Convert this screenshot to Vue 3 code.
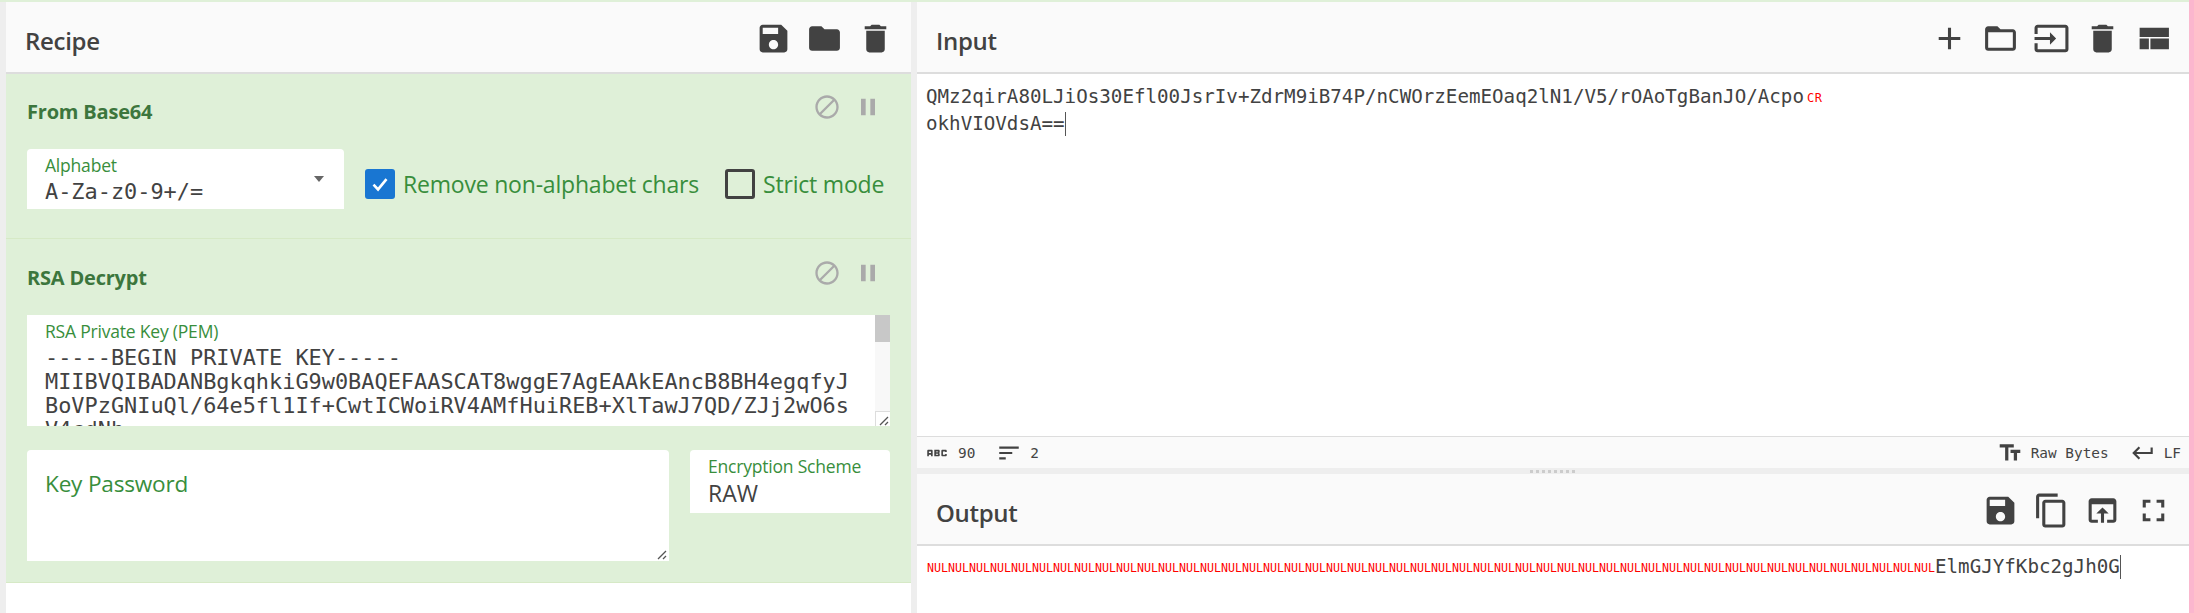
<script setup>
const icons = {
  save: 'M17 3H5c-1.11 0-2 .9-2 2v14c0 1.1.89 2 2 2h14c1.1 0 2-.9 2-2V7l-4-4zm-5 16c-1.66 0-3-1.34-3-3s1.34-3 3-3 3 1.34 3 3-1.34 3-3 3zm3-10H5V5h10v4z',
  folder: 'M10 4H4c-1.1 0-1.99.9-1.99 2L2 18c0 1.1.9 2 2 2h16c1.1 0 2-.9 2-2V8c0-1.1-.9-2-2-2h-8l-2-2z',
  del: 'M6 19c0 1.1.9 2 2 2h8c1.1 0 2-.9 2-2V7H6v12zM19 4h-3.5l-1-1h-5l-1 1H5v2h14V4z',
  add: 'M19 13h-6v6h-2v-6H5v-2h6V5h2v6h6v2z',
  open: 'M20 6h-8l-2-2H4c-1.1 0-1.99.9-1.99 2L2 18c0 1.1.9 2 2 2h16c1.1 0 2-.9 2-2V8c0-1.1-.9-2-2-2zm0 12H4V8h16v10z',
  input: 'M21 3.01H3c-1.1 0-2 .9-2 2V9h2V4.99h18v14.03H3V15H1v4.01c0 1.1.9 1.98 2 1.98h18c1.1 0 2-.88 2-1.98v-14c0-1.11-.9-2-2-2zM11 16l4-4-4-4v3H1v2h10v3z',
  layout: 'M3 19h6v-7H3v7zm7 0h12v-7H10v7zM3 5v6h19V5H3z',
  copy: 'M16 1H4c-1.1 0-2 .9-2 2v14h2V3h12V1zm3 4H8c-1.1 0-2 .9-2 2v14c0 1.1.9 2 2 2h11c1.1 0 2-.9 2-2V7c0-1.1-.9-2-2-2zm0 16H8V7h11v14z',
  browser: 'M19 4H5c-1.11 0-2 .9-2 2v12c0 1.1.89 2 2 2h4v-2H5V8h14v10h-4v2h4c1.1 0 2-.9 2-2V6c0-1.1-.89-2-2-2zm-7 6l-4 4h3v6h2v-6h3l-4-4z',
  full: 'M7 14H5v5h5v-2H7v-3zm-2-4h2V7h3V5H5v5zm12 7h-3v2h5v-5h-2v3zM14 5v2h3v3h2V5h-5z',
  block: 'M12 2C6.48 2 2 6.48 2 12s4.48 10 10 10 10-4.48 10-10S17.52 2 12 2zM4 12c0-4.42 3.58-8 8-8 1.85 0 3.55.63 4.9 1.69L5.69 16.9C4.63 15.55 4 13.85 4 12zm8 8c-1.85 0-3.55-.63-4.9-1.69L18.31 7.1C19.37 8.45 20 10.15 20 12c0 4.42-3.58 8-8 8z',
  pause: 'M6 19h4V5H6v14zm8-14v14h4V5h-4z',
  sort: 'M3 18h6v-2H3v2zM3 6v2h18V6H3zm0 7h12v-2H3v2z',
  abc: 'M21 11h-1.5v-.5h-2v3h2V13H21v1c0 .55-.45 1-1 1h-3c-.55 0-1-.45-1-1v-4c0-.55.45-1 1-1h3c.55 0 1 .45 1 1v1zM8 10v5H6.5v-1.5h-2V15H3v-5c0-.55.45-1 1-1h3c.55 0 1 .45 1 1zm-1.5.5h-2V12h2v-1.5zm7 1.5c.55 0 1 .45 1 1v1c0 .55-.45 1-1 1h-4V9h4c.55 0 1 .45 1 1v1c0 .55-.45 1-1 1zM11 10.5v.75h2v-.75h-2zm2 2.25h-2v.75h2v-.75z',
  text: 'M2.5 4v3h5v12h3V7h5V4h-13zm19 5h-9v3h3v7h3v-7h3V9z',
  ret: 'M19 7v4H5.83l3.58-3.59L8 6l-6 6 6 6 1.41-1.41L5.83 13H21V7h-2z'
}
const recipeBtns = ['save', 'folder', 'del']
const inputBtns = ['add', 'open', 'input', 'del', 'layout']
const outputBtns = ['save', 'copy', 'browser', 'full']
const opBtns = ['block', 'pause']
const pem = `-----BEGIN PRIVATE KEY-----
MIIBVQIBADANBgkqhkiG9w0BAQEFAASCAT8wggE7AgEAAkEAncB8BH4egqfyJ
BoVPzGNIuQl/64e5fl1If+CwtICWoiRV4AMfHuiREB+XlTawJ7QD/ZJj2wO6s
V4cdNh`
const nulCount = 48
</script>

<template>
  <div class="page">
    <div class="main">
      <div class="strip"></div>
      <div class="cols">
        <section class="recipe">
          <header class="head">
            <h2 class="title">Recipe</h2>
            <div class="btns">
              <span v-for="b in recipeBtns" :key="b" class="btn">
                <svg viewBox="0 0 24 24"><path :d="icons[b]" /></svg>
              </span>
            </div>
          </header>

          <div class="op op-b64">
            <div class="op-head">
              <h3 class="op-title">From Base64</h3>
              <div class="op-btns">
                <svg v-for="b in opBtns" :key="b" viewBox="0 0 24 24"><path :d="icons[b]" /></svg>
              </div>
            </div>
            <div class="op-row">
              <div class="field alpha">
                <div class="lab">Alphabet</div>
                <div class="val">A-Za-z0-9+/=</div>
                <span class="caret"></span>
              </div>
              <label class="check first">
                <span class="box on">
                  <svg viewBox="0 0 24 24"><path d="M6 12.5l4.2 4.5L18 7.5" /></svg>
                </span>
                <span>Remove non-alphabet chars</span>
              </label>
              <label class="check second">
                <span class="box"></span>
                <span>Strict mode</span>
              </label>
            </div>
          </div>

          <div class="op op-rsa">
            <div class="op-head rsa-head">
              <h3 class="op-title">RSA Decrypt</h3>
              <div class="op-btns">
                <svg v-for="b in opBtns" :key="b" viewBox="0 0 24 24"><path :d="icons[b]" /></svg>
              </div>
            </div>
            <div class="field pem">
              <div class="lab">RSA Private Key (PEM)</div>
              <div class="val pem-val">{{ pem }}</div>
              <div class="scroll"><div class="thumb"></div></div>
              <div class="grip corner"><svg viewBox="0 0 15 15"><path d="M4 13L12 5M9 13l3-3" /></svg></div>
            </div>
            <div class="pw-row">
              <div class="field pw">
                <div class="pw-lab">Key Password</div>
                <div class="grip"><svg viewBox="0 0 15 15"><path d="M4 13L12 5M9 13l3-3" /></svg></div>
              </div>
              <div class="field scheme">
                <div class="lab">Encryption Scheme</div>
                <div class="raw">RAW</div>
              </div>
            </div>
          </div>
        </section>

        <section class="io">
          <header class="head">
            <h2 class="title">Input</h2>
            <div class="btns">
              <span v-for="b in inputBtns" :key="b" class="btn">
                <svg viewBox="0 0 24 24"><path :d="icons[b]" /></svg>
              </span>
            </div>
          </header>
          <div class="in-body">
            <div class="code">QMz2qirA80LJiOs30Efl00JsrIv+ZdrM9iB74P/nCWOrzEemEOaq2lN1/V5/rOAoTgBanJO/Acpo<span class="ctl cr">CR</span></div>
            <div class="code">okhVIOVdsA==<span class="cursor"></span></div>
          </div>
          <div class="status">
            <div class="st-group">
              <svg viewBox="0 0 24 24"><path :d="icons.abc" /></svg><span>90</span>
              <svg class="st-next" viewBox="0 0 24 24"><path :d="icons.sort" /></svg><span>2</span>
            </div>
            <div class="st-group">
              <svg viewBox="0 0 24 24"><path :d="icons.text" /></svg><span>Raw Bytes</span>
              <svg class="st-next" viewBox="0 0 24 24"><path :d="icons.ret" /></svg><span>LF</span>
            </div>
          </div>
          <div class="resizer"><div class="dots"></div></div>
          <header class="head">
            <h2 class="title">Output</h2>
            <div class="btns">
              <span v-for="b in outputBtns" :key="b" class="btn">
                <svg viewBox="0 0 24 24"><path :d="icons[b]" /></svg>
              </span>
            </div>
          </header>
          <div class="out-body">
            <div class="code"><span v-for="n in nulCount" :key="n" class="ctl">NUL</span>ElmGJYfKbc2gJh0G<span class="cursor"></span></div>
          </div>
        </section>
      </div>
    </div>
    <div class="accent"></div>
  </div>
</template>

<style scoped>
.page { display: flex; width: 2194px; height: 613px; overflow: hidden; font-family: "Open Sans", "Noto Sans", sans-serif; color: #424242; }
.main { width: 2189px; display: flex; flex-direction: column; }
.strip { height: 2px; background: #dff0d8; }
.accent { width: 5px; background: #fbb6ce; }
.cols { flex: 1; display: grid; grid-template-columns: 905px 1272px; column-gap: 6px; padding-left: 6px; background: #eee; min-height: 0; }
.recipe, .io { background: #fff; display: flex; flex-direction: column; min-height: 0; }

.head { height: 72px; box-sizing: border-box; flex: none; background: #fafafa; border-bottom: 2px solid #ddd; display: flex; justify-content: space-between; align-items: flex-start; padding: 0 10px 0 19px; }
.title { margin: 25px 0 0; font-size: 24px; font-weight: 600; line-height: 28px; letter-spacing: -0.3px; }
.btns { display: flex; margin-top: 18px; }
.btn { width: 51px; height: 37px; display: flex; justify-content: center; }
.btn svg { width: 37px; height: 37px; fill: #424242; }

.op { background: #dff0d8; border-bottom: 1px solid #d6e9c6; padding: 0 21px; box-sizing: border-box; flex: none; }
.op-b64 { height: 165px; }
.op-rsa { height: 344px; }
.op-head { height: 75px; display: flex; justify-content: space-between; }
.op-title { margin: 25px 0 0; font-size: 20px; font-weight: 700; line-height: 26px; color: #3c763d; letter-spacing: -0.2px; }
.op-btns { display: flex; gap: 13px; margin: 19px 0 0; height: 28px; }
.rsa-head { height: 76px; }
.rsa-head .op-title { margin-top: 26px; }
.rsa-head .op-btns { margin-top: 20px; }
.op-btns svg { width: 28px; height: 28px; fill: #aaa; }
.op-btns svg:last-child { margin-right: 8px; }

.op-row { display: flex; }
.field { position: relative; background: #fff; box-sizing: border-box; padding: 6px 18px 0; border-radius: 4px 4px 0 0; }
.alpha { width: 317px; height: 60px; flex: none; }
.lab { font-size: 17.5px; line-height: 20px; color: #388e3c; letter-spacing: -0.2px; }
.val { font-family: "DejaVu Sans Mono", monospace; font-size: 21.9px; line-height: 24px; margin-top: 5px; color: #424242; white-space: pre; }
.caret { position: absolute; left: 287px; top: 27px; width: 0; height: 0; border-left: 5.5px solid transparent; border-right: 5.5px solid transparent; border-top: 6px solid #666; }

.check { display: flex; align-items: center; gap: 8px; height: 30px; margin-top: 20px; font-size: 23px; color: #388e3c; letter-spacing: -0.2px; white-space: nowrap; }
.check.first { margin-left: 21px; }
.check.second { margin-left: 26px; }
.box { width: 30px; height: 30px; box-sizing: border-box; border: 3px solid #424242; border-radius: 3px; flex: none; }
.box.on { background: #1976d2; border: none; display: flex; align-items: center; justify-content: center; }
.box.on svg { width: 26px; height: 26px; fill: none; stroke: #fff; stroke-width: 2.4; }

.pem { width: 863px; height: 111px; overflow: hidden; margin-bottom: 24px; border-radius: 0; }
.pem-val { height: 120px; }
.scroll { position: absolute; right: 0; top: 0; width: 15px; height: 111px; background: #f8f8f8; }
.thumb { height: 27px; background: #c8c8c8; }
.grip { position: absolute; right: 0; bottom: 0; width: 15px; height: 15px; }
.grip svg { width: 15px; height: 15px; fill: none; stroke: #555; stroke-width: 1.3; display: block; }
.corner { background: #fff; border: 1px solid #ddd; border-width: 1px 0 0 1px; box-sizing: border-box; }

.pw-row { display: flex; gap: 21px; align-items: flex-start; }
.pw { width: 642px; height: 111px; padding-top: 19px; }
.pw-lab { font-size: 22.6px; line-height: 30px; color: #388e3c; letter-spacing: -0.2px; }
.scheme { width: 200px; height: 63px; border-radius: 4px 4px 0 0; }
.raw { font-size: 23px; line-height: 24px; margin-top: 5px; }

.in-body { flex: none; height: 362px; box-sizing: border-box; padding: 9px 9px 0; }
.code { font-family: "DejaVu Sans Mono", monospace; font-size: 19.2px; line-height: 27.4px; color: #424242; white-space: pre; height: 27.4px; }
.ctl { display: inline-block; font-size: 11.64px; line-height: 20px; color: #f00; vertical-align: 1px; }
.cr { margin-left: 3px; font-size: 12px; letter-spacing: 0.5px; }
.cursor { display: inline-block; width: 1px; height: 24px; background: #555; vertical-align: -6px; }

.status { flex: none; height: 32px; box-sizing: border-box; border-top: 1px solid #ddd; background: #fafafa; display: flex; justify-content: space-between; align-items: center; padding: 0 8px 0 7px; font-family: "DejaVu Sans Mono", monospace; font-size: 14.4px; color: #444; }
.st-group { display: flex; align-items: center; gap: 8px; white-space: pre; }
.st-group svg { width: 26px; height: 26px; fill: #424242; flex: none; }
.st-group .st-next { margin-left: 13px; }

.resizer { flex: none; height: 6px; background: #eee; display: flex; justify-content: center; align-items: center; }
.dots { width: 46px; height: 3px; background: repeating-linear-gradient(90deg, #ccc 0 3px, transparent 3px 6px); }

.out-body { flex: 1; min-height: 0; padding: 7px 10px 0; }
</style>

<style>
html, body { margin: 0; background: #fff; }
</style>
